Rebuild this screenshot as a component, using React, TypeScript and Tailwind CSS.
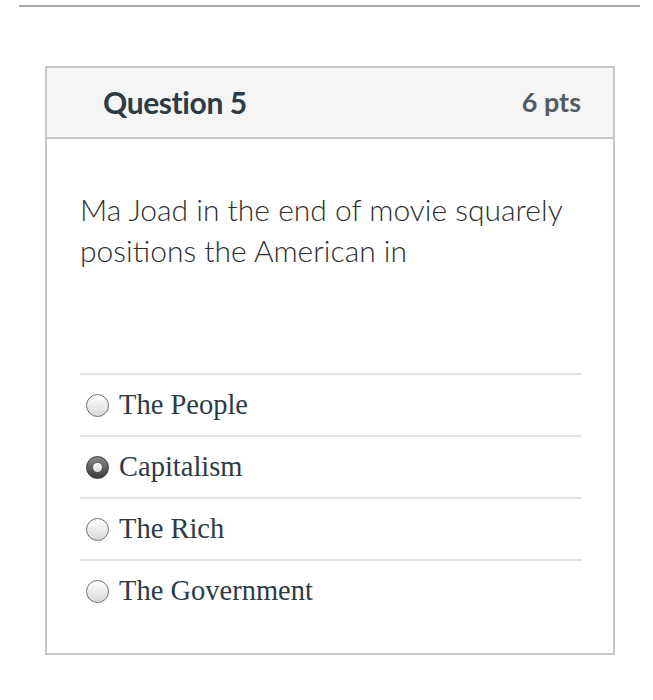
const answers = [
  { id: 1, text: 'The People' },
  { id: 2, text: 'Capitalism' },
  { id: 3, text: 'The Rich' },
  { id: 4, text: 'The Government' },
];

function Radio({ checked }: { checked: boolean }) {
  if (checked) {
    return (
      <span className="flex h-[23px] w-[23px] shrink-0 items-center justify-center rounded-full border border-[#3a3a3a] bg-gradient-to-b from-[#8a8a8a] to-[#3c3c3c]">
        <span className="h-[9px] w-[9px] rounded-full bg-gradient-to-b from-white to-[#d8d8d8]" />
      </span>
    );
  }
  return (
    <span className="h-[23px] w-[23px] shrink-0 rounded-full border border-[#6f6f6f] bg-gradient-to-b from-white to-[#d9d9d9]" />
  );
}

export default function App() {
  const selected = 2;

  return (
    <div className="min-h-[700px] w-[653px] bg-white font-['Lato',sans-serif] text-[#2d3b45]">
      <div className="pt-[5px] pl-[19px] pr-[13px]">
        <div className="h-[2px] bg-[#a9a9a9]" />
      </div>

      <div className="ml-[45px] mt-[59px] h-[589px] w-[570px] border-2 border-[#c7c7c7]">
        <div className="flex h-[71px] items-center justify-between border-b-2 border-[#c7c7c7] bg-[#f5f5f5] pl-[56px] pr-[32px]">
          <h2 className="text-[30px] font-bold tracking-[-0.4px]">Question 5</h2>
          <span className="text-[27px] font-bold text-[#555b60]">6 pts</span>
        </div>

        <div className="pl-[33px] pr-[31px]">
          <p className="pt-[50px] text-[30px] font-light leading-[41px] text-[#2f2f2f]">
            Ma Joad in the end of movie squarely positions the American in
          </p>

          <div className="mt-[102px]">
            {answers.map(a => (
              <label key={a.id} className="flex h-[62px] items-center gap-[10px] border-t-2 border-[#e2e2e2] pl-[6px]">
                <Radio checked={a.id === selected} />
                <span className="font-['Liberation_Serif',serif] text-[28.5px] text-[#2d3b45]">{a.text}</span>
              </label>
            ))}
          </div>
        </div>
      </div>
    </div>
  );
}
